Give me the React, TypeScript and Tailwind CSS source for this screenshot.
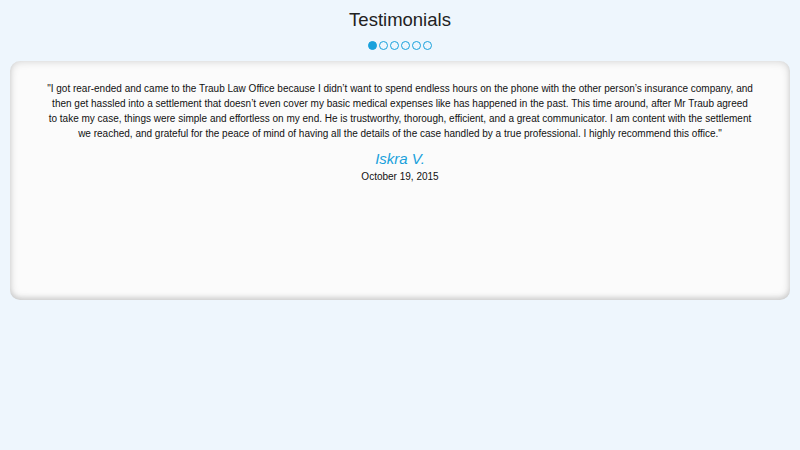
export default function App() {
  const dots = [0, 1, 2, 3, 4, 5];
  return (
    <div
      className="min-h-[450px] w-[800px] bg-[#eef6fd] px-[10px] pt-[8px]"
      style={{ fontFamily: '"Liberation Sans", Arial, sans-serif' }}
    >
      <h2 className="text-center text-[18.5px] leading-[24px] text-[#222]">Testimonials</h2>
      <div className="mt-[9px] flex justify-center gap-[2px]">
        {dots.map((d) => (
          <span
            key={d}
            className={
              d === 0
                ? "h-[9px] w-[9px] rounded-full border-[1.5px] border-[#19a1dc] bg-[#19a1dc]"
                : "h-[9px] w-[9px] rounded-full border-[1.5px] border-[#19a1dc] bg-transparent"
            }
          />
        ))}
      </div>
      <div className="mt-[11px] h-[239px] rounded-[10px] bg-[#fbfbfb] px-[30px] pt-[20px] shadow-[inset_0_0_8px_rgba(0,0,0,0.18),inset_0_-3px_4px_rgba(0,0,0,0.08)]">
        <p className="text-center text-[10px] leading-[15px] text-[#111]">
          "I got rear-ended and came to the Traub Law Office because I didn’t want to spend endless hours on the phone with the other person’s insurance company, and
          <br />
          then get hassled into a settlement that doesn’t even cover my basic medical expenses like has happened in the past. This time around, after Mr Traub agreed
          <br />
          to take my case, things were simple and effortless on my end. He is trustworthy, thorough, efficient, and a great communicator. I am content with the settlement
          <br />
          we reached, and grateful for the peace of mind of having all the details of the case handled by a true professional. I highly recommend this office."
        </p>
        <p className="mt-[8px] text-center text-[15px] italic leading-[20px] text-[#19a1dc]">Iskra V.</p>
        <p className="text-center text-[10px] leading-[15px] text-[#111]">October 19, 2015</p>
      </div>
    </div>
  );
}
